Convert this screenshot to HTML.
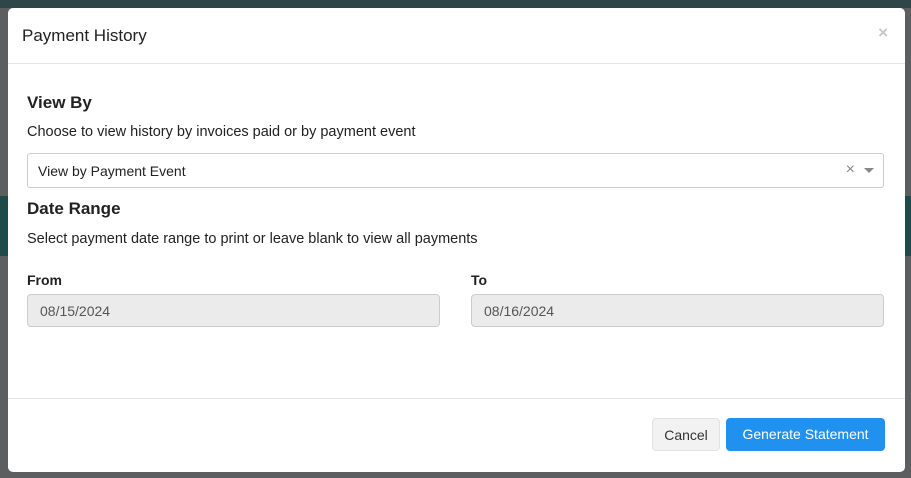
<!DOCTYPE html>
<html><head><style>
body{margin:0;width:911px;height:478px;background:#5c5e5f;position:relative;overflow:hidden;font-family:"Liberation Sans",sans-serif;color:#222}
.top{position:absolute;left:0;top:0;width:911px;height:8px;background:#2f4649}
.band{position:absolute;left:0;top:196px;width:911px;height:60px;background:#1e4a4a}
.modal{position:absolute;left:8px;top:8px;width:897px;height:464px;background:#fff;border-radius:5px}
.hdr{height:55px;border-bottom:1px solid #e5e5e5;position:relative}
.hdr h1{margin:0;position:absolute;left:14px;top:18px;font-size:17px;font-weight:normal;color:#222}
.x{position:absolute;right:17px;top:15px;color:#c8c8c8;font-size:17px;font-weight:bold}
.abs{position:absolute}
h2{margin:0;font-size:17px;font-weight:bold;position:absolute;left:19px}
p{margin:0;font-size:14.5px;position:absolute;left:19px}
.sel{position:absolute;left:19px;top:145px;width:855px;height:33px;border:1px solid #ccc;border-radius:3px;font-size:14px}
.inp{position:absolute;top:286px;width:413px;height:33px;border:1px solid #ccc;border-radius:4px;background:#ebebeb;font-size:14px;color:#555;box-sizing:border-box;padding:8px 12px}
.lbl{position:absolute;top:264px;font-size:14px;font-weight:bold}
.ftr{position:absolute;left:0;top:390px;width:897px;border-top:1px solid #e5e5e5}
.btn{position:absolute;top:410px;height:33px;border-radius:4px;font-size:14px;line-height:33px;text-align:center;box-sizing:border-box}
</style></head><body>
<div class="top"></div><div class="band"></div>
<div class="modal">
<div class="hdr"><h1>Payment History</h1><span class="x">×</span></div>
<h2 style="top:85px">View By</h2>
<p style="top:116px">Choose to view history by invoices paid or by payment event</p>
<div class="sel"><span class="abs" style="left:10px;top:9px">View by Payment Event</span><span class="abs" style="right:28px;top:7px;color:#888;font-size:16px">×</span><span class="abs" style="right:9px;top:14px;width:0;height:0;border-left:5px solid transparent;border-right:5px solid transparent;border-top:5px solid #888"></span></div>
<h2 style="top:191px">Date Range</h2>
<p style="top:223px">Select payment date range to print or leave blank to view all payments</p>
<div class="lbl" style="left:19px">From</div><div class="lbl" style="left:463px">To</div>
<div class="inp" style="left:19px">08/15/2024</div>
<div class="inp" style="left:463px">08/16/2024</div>
<div class="ftr"></div>
<div class="btn" style="left:644px;width:68px;background:#f2f2f2;border:1px solid #e2e2e2;color:#333">Cancel</div>
<div class="btn" style="left:718px;width:159px;background:#2191f0;color:#fff">Generate Statement</div>
</div>
</body></html>
